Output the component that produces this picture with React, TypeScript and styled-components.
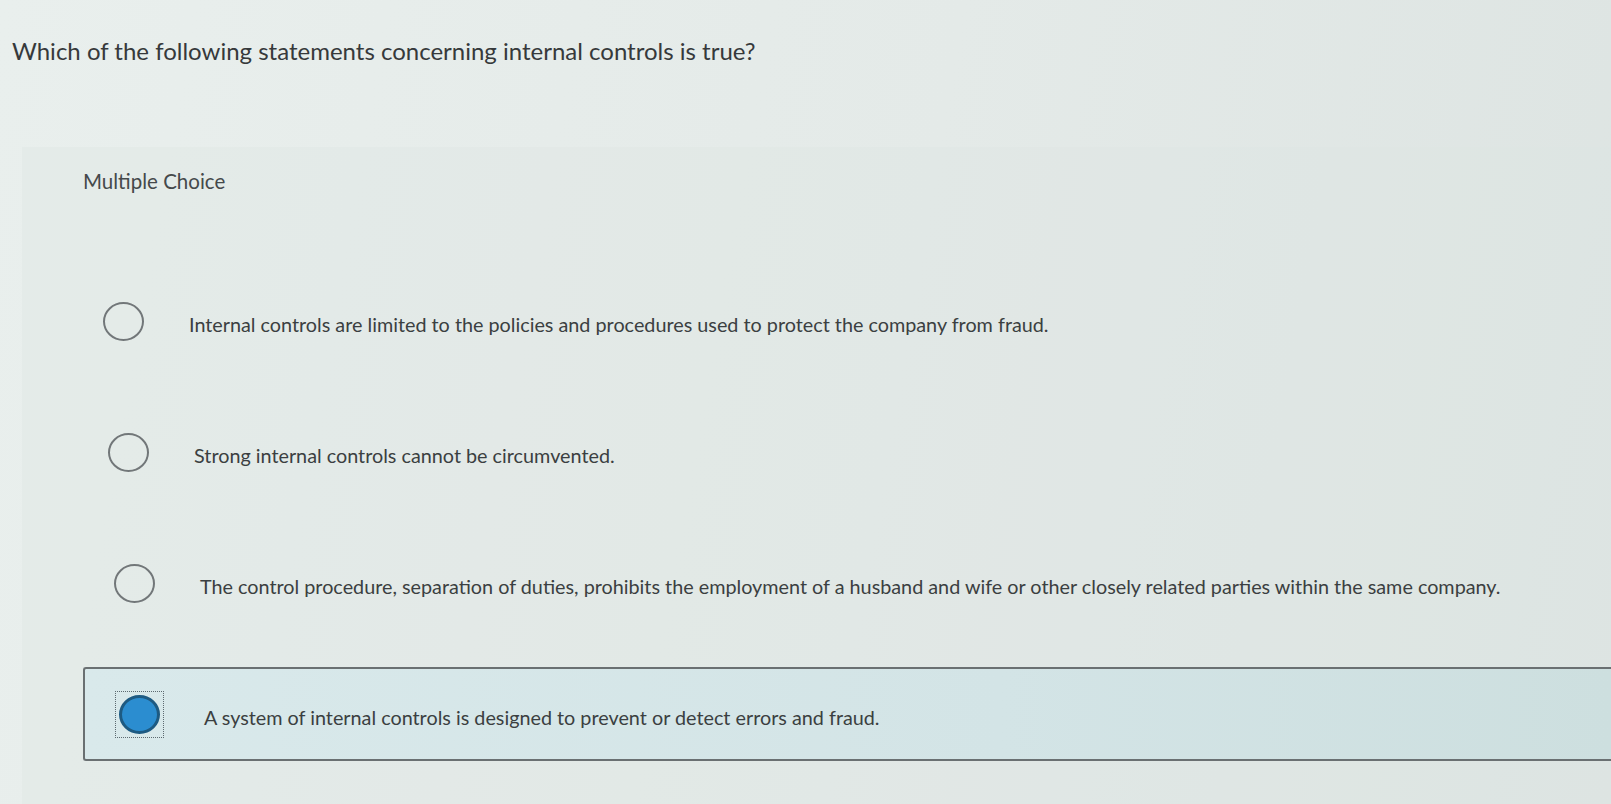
import React from "react";
import styled, { createGlobalStyle } from "styled-components";

const Global = createGlobalStyle`
  html, body { margin: 0; padding: 0; }
  body {
    width: 1611px;
    height: 804px;
    overflow: hidden;
    background: linear-gradient(100deg, #e9efed 0%, #e4eae8 55%, #dde4e2 100%);
    font-family: Lato, "Open Sans", sans-serif;
    color: #3b3f41;
  }
`;

const Page = styled.div`
  display: flex;
  flex-direction: column;
  height: 804px;
`;

const Question = styled.h1`
  margin: 0;
  padding: 37px 0 0 12px;
  font-size: 24px;
  line-height: 28px;
  font-weight: 400;
  color: #36393b;
`;

const Panel = styled.section`
  flex: 1;
  margin: 82px 0 0 22px;
  padding: 22px 0 0 61px;
  background: rgba(220, 228, 226, 0.35);
  display: flex;
  flex-direction: column;
`;

const Label = styled.div`
  font-size: 20.5px;
  line-height: 24px;
  color: #45494b;
`;

const Options = styled.div`
  display: flex;
  flex-direction: column;
  gap: 37px;
  margin-top: 81px;
`;

const Option = styled.div<{ $shift: number; $selected?: boolean }>`
  height: 94px;
  box-sizing: border-box;
  display: flex;
  align-items: center;
  gap: 45px;
  padding-left: ${(p) => 18 + p.$shift}px;
  border: 2px solid ${(p) => (p.$selected ? "#6a7072" : "transparent")};
  border-right: none;
  border-radius: 3px 0 0 3px;
  background: ${(p) =>
    p.$selected ? "linear-gradient(90deg, #d9e9eb 0%, #d3e4e6 60%, #cddfdf 100%)" : "transparent"};
`;

const FocusRing = styled.span`
  flex: none;
  display: flex;
  margin: -4.5px;
  padding: 3px;
  border: 1.5px dotted #5d6a70;
`;

const Radio = styled.span<{ $checked?: boolean }>`
  flex: none;
  width: 41px;
  height: 39px;
  box-sizing: border-box;
  border-radius: 50%;
  border: ${(p) => (p.$checked ? "3px solid #1d5a82" : "2px solid #727779")};
  background: ${(p) => (p.$checked ? "#2b8dd0" : "transparent")};
`;

const Text = styled.span`
  font-size: 19.8px;
  line-height: 24px;
  color: #3b3f41;
  white-space: nowrap;
  padding-top: 6px;
`;

const options = [
  "Internal controls are limited to the policies and procedures used to protect the company from fraud.",
  "Strong internal controls cannot be circumvented.",
  "The control procedure, separation of duties, prohibits the employment of a husband and wife or other closely related parties within the same company.",
  "A system of internal controls is designed to prevent or detect errors and fraud.",
];

const shifts = [0, 5, 11, 16];

export default function App() {
  return (
    <Page>
      <Global />
      <Question>Which of the following statements concerning internal controls is true?</Question>
      <Panel>
        <Label>Multiple Choice</Label>
        <Options>
          {options.map((t, i) => {
            const selected = i === 3;
            return (
              <Option key={i} $shift={shifts[i]} $selected={selected}>
                {selected ? (
                  <FocusRing>
                    <Radio $checked />
                  </FocusRing>
                ) : (
                  <Radio />
                )}
                <Text>{t}</Text>
              </Option>
            );
          })}
        </Options>
      </Panel>
    </Page>
  );
}
